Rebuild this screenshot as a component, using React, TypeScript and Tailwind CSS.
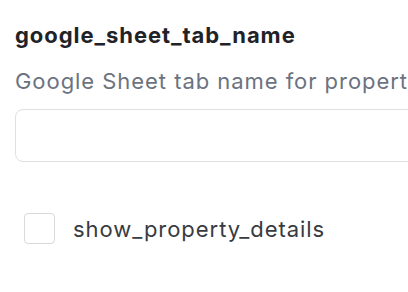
export default function App() {
  return (
    <div className="min-h-screen bg-white font-['Inter',sans-serif] overflow-hidden">
      <div className="pl-[15px] pt-[21px] w-[640px]">
        <div className="text-[22px] leading-[28px] font-bold tracking-[0.95px] text-[#1f2328] whitespace-nowrap">
          google_sheet_tab_name
        </div>
        <div className="mt-[18px] text-[22px] leading-[28px] tracking-[0.95px] text-[#6b7280] whitespace-nowrap">
          Google Sheet tab name for property details
        </div>
        <input
          type="text"
          className="mt-[14px] block w-[560px] h-[53px] rounded-[8px] border-[1.5px] border-[#e0e0e0] bg-white outline-none"
        />
        <label className="mt-[51px] ml-[9px] flex items-center gap-[18px]">
          <span className="block w-[31px] h-[31px] shrink-0 rounded-[4px] border-[1.5px] border-[#d9d9d9] bg-white" />
          <span className="text-[22px] leading-[28px] tracking-[0.95px] text-[#373b41] whitespace-nowrap">
            show_property_details
          </span>
        </label>
      </div>
    </div>
  );
}
